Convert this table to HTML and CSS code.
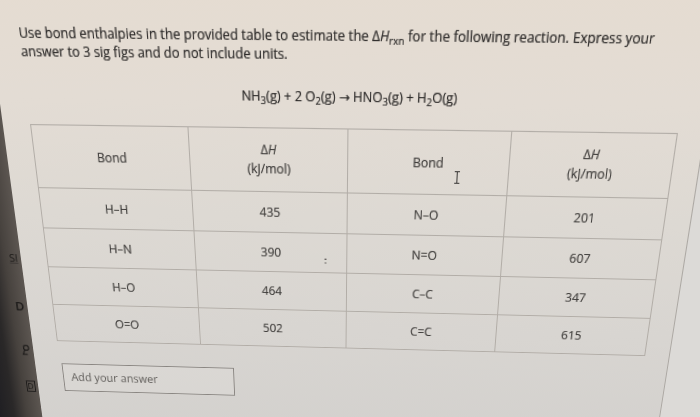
FILE: index.html
```html
<!DOCTYPE html>
<html lang="en">
<head>
<meta charset="utf-8">
<title>Bond enthalpies</title>
<link rel="stylesheet" href="styles.css">
</head>
<body>
<div class="page">
  <aside class="rail">
    <span class="rail-item rail-sl">Sl</span>
    <span class="rail-item rail-d">D</span>
    <svg class="rail-item rail-user" viewBox="0 0 10 16" width="9" height="15" aria-hidden="true">
      <circle cx="6" cy="5" r="3.2" fill="none" stroke="#1d1b1a" stroke-width="1.4"/>
      <path d="M4 8 L1.5 13.5 L7 13.5" fill="none" stroke="#1d1b1a" stroke-width="1.4"/>
    </svg>
    <span class="rail-item rail-box">D</span>
  </aside>
  <main class="panel">
    <p class="question">Use bond enthalpies in the provided table to estimate the Δ<i>H</i><sub>rxn</sub> for the following reaction. Express your answer to 3 sig figs and do not include units.</p>
    <p class="equation">NH<sub>3</sub>(g) + 2 O<sub>2</sub>(g) → HNO<sub>3</sub>(g) + H<sub>2</sub>O(g)</p>
    <table class="bonds">
      <thead>
        <tr>
          <th>Bond</th>
          <th><span class="dh">Δ<i>H</i></span><span class="unit">(kJ/mol)</span></th>
          <th class="cursor-cell">Bond<span class="ibeam" aria-hidden="true"></span></th>
          <th><span class="dh">Δ<i>H</i></span><span class="unit">(kJ/mol)</span></th>
        </tr>
      </thead>
      <tbody>
        <tr><td>H–H</td><td>435</td><td>N–O</td><td>201</td></tr>
        <tr><td>H–N</td><td class="mark-cell">390<span class="mark" aria-hidden="true"></span></td><td>N=O</td><td>607</td></tr>
        <tr><td>H–O</td><td>464</td><td>C–C</td><td>347</td></tr>
        <tr><td>O=O</td><td>502</td><td>C=C</td><td>615</td></tr>
      </tbody>
    </table>
    <div class="answer">Add your answer</div>
  </main>
  <div class="gutter"></div>
</div>
</body>
</html>
```

FILE: styles.css
```css
html, body {
  margin: 0;
  padding: 0;
  width: 700px;
  height: 417px;
  overflow: hidden;
  background: #d8d5d1;
}

.page {
  display: flex;
  width: 760px;
  height: 470px;
  transform-origin: 0 0;
  transform: matrix3d(1.071101, 0.0077854, 0, -0.000057372,
                      0.155974, 1.202882, 0, 0.00047762,
                      0, 0, 1, 0,
                      -35.334, -23.044, 0, 1);
  background: linear-gradient(180deg, #e5dcd1 0%, #e3dcd4 22%, #ddd9d3 45%, #d8d5d1 70%, #d2d0cd 100%);
  font-family: "Open Sans", "DejaVu Sans", sans-serif;
}

.rail {
  flex: none;
  width: 56.6px;
  margin-left: -40px;
  box-sizing: border-box;
  padding: 253px 3px 0 0;
  display: flex;
  flex-direction: column;
  align-items: flex-end;
  background: linear-gradient(90deg, #1a1a20 0%, #2a2828 45%, #47423e 70%, #5c5651 100%);
}

.rail-item {
  display: block;
  height: 14px;
  color: #1b1918;
  font-size: 11px;
  line-height: 14px;
}

.rail-sl { text-decoration: underline; text-decoration-color: #3a3634; }
.rail-d { margin-top: 37px; font-size: 13px; font-weight: 600; }
.rail-user { margin-top: 35px; margin-right: 1px; }
.rail-box {
  margin-top: 28px;
  height: 11px;
  width: 8px;
  border: 1px solid #1d1b1a;
  font-size: 9px;
  line-height: 11px;
  text-align: center;
}

.panel {
  flex: none;
  width: 670.4px;
  box-sizing: border-box;
  padding: 38.7px 25px 0 27.4px;
  border-right: 1px solid #aca8a3;
}

.gutter {
  flex: 1;
  background: #dcdad7;
}

.question {
  margin: 0;
  width: 610px;
  font-size: 12.2px;
  line-height: 16.4px;
  color: #2e2c2b;
  text-shadow: 0 0 0.6px rgba(40, 38, 36, 0.55);
}

sub {
  font-size: 0.75em;
  line-height: 0;
  vertical-align: -0.3em;
}

.equation {
  margin: 20.9px 0 0;
  width: 618px;
  text-align: center;
  font-size: 12.2px;
  line-height: 16.4px;
  color: #2e2c2b;
  text-shadow: 0 0 0.6px rgba(40, 38, 36, 0.55);
}

.bonds {
  margin-top: 19.2px;
  width: 618px;
  table-layout: fixed;
  border-collapse: collapse;
}

.bonds th,
.bonds td {
  border: 1px solid #b2ada7;
  padding: 0;
  text-align: center;
  vertical-align: middle;
  font-weight: normal;
  font-size: 12px;
  color: #403e3c;
  text-shadow: 0 0 0.5px rgba(50, 48, 46, 0.45);
}

.bonds thead tr { height: 60px; }
.bonds tbody tr { height: 40px; }

.dh,
.unit {
  display: block;
  line-height: 18.5px;
}

.cursor-cell,
.mark-cell { position: relative; }

.ibeam {
  position: absolute;
  left: 103px;
  top: 37px;
  width: 5px;
  height: 12px;
  border-top: 1px solid #3c3a38;
  border-bottom: 1px solid #3c3a38;
  box-sizing: border-box;
}

.ibeam::before {
  content: "";
  position: absolute;
  left: 2px;
  top: 0;
  width: 1px;
  height: 10px;
  background: #3c3a38;
}

.mark {
  position: absolute;
  left: 131px;
  top: 25px;
  width: 1.5px;
  height: 1.5px;
  background: #6a6764;
  box-shadow: 0 4px 0 #6a6764;
}

.answer {
  margin: 25px 0 0 2px;
  width: 187px;
  height: 32px;
  box-sizing: border-box;
  border: 1px solid #8a8682;
  padding: 2px 8px 0;
  font-size: 12px;
  line-height: 26px;
  color: #63605d;
  background: rgba(255, 255, 255, 0.1);
}
```
